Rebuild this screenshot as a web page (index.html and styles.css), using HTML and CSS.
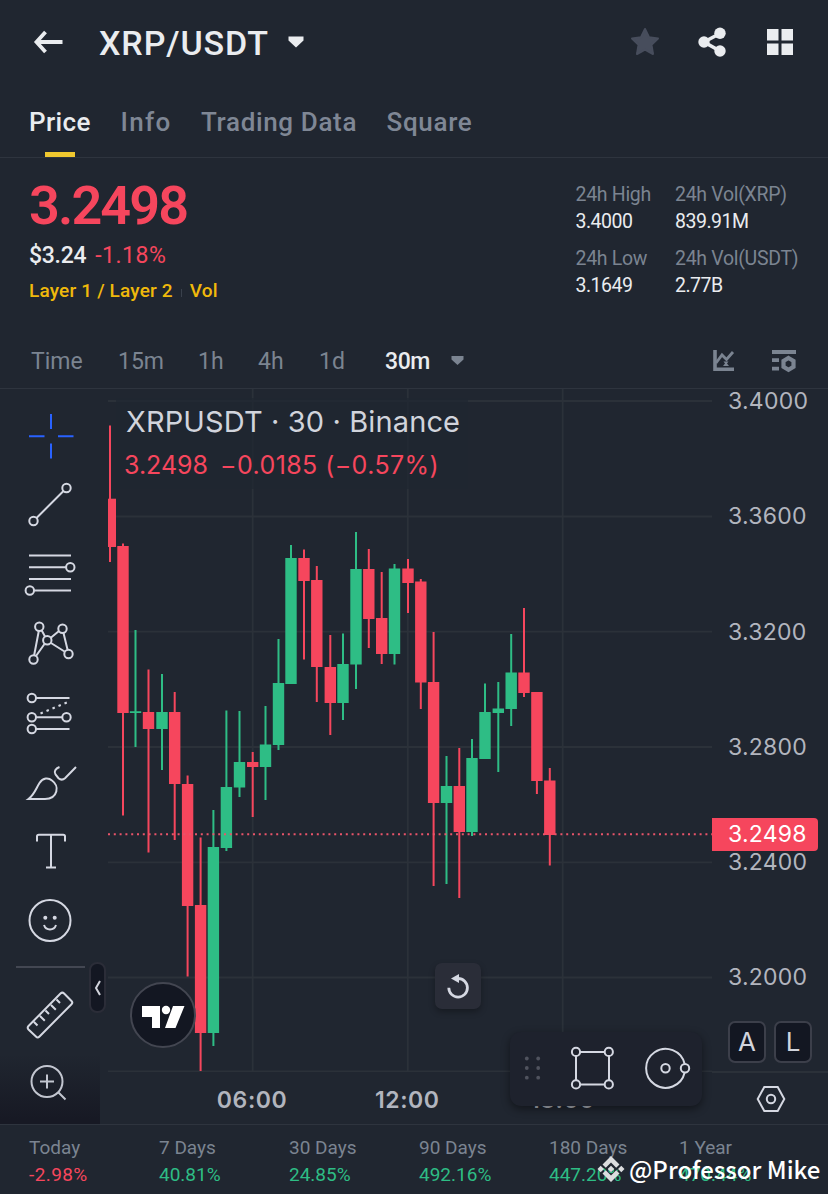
FILE: index.html
```html
<!DOCTYPE html>
<html lang="en">
<head>
  <meta charset="UTF-8" />
  <meta name="viewport" content="width=device-width, initial-scale=1" />
  <title>XRP/USDT</title>
  <link rel="stylesheet" href="styles.css">
</head>
<body>

  <header class="header">
    <svg class="back" width="30" height="24" viewBox="0 0 30 24"><path d="M12.500 2L3.500 12l9 10M3.500 12h26" /></svg>
    <h1 class="pair">XRP/USDT</h1>
    <svg class="caret" width="16" height="12" viewBox="0 0 16 12"><path d="M0.5 0.5h15v4L8 11.5 0.5 4.5z" /></svg>
    <div class="header-icons">
      <svg width="30" height="30" viewBox="0 0 30 30"><path class="star" d="M15 2l4 8.200 9 1.300-6.500 6.300 1.500 9.200-8-4.400-8 4.400 1.500-9.200L2 11.500l9-1.300z" /></svg>
      <svg width="30" height="30" viewBox="0 0 30 30"><path class="share-line" d="M22 6.500L6 15l16 9" /><g class="light"><circle cx="22" cy="6.300" r="5.700" /><circle cx="6" cy="15" r="5.700" /><circle cx="22" cy="24" r="5.700" /></g></svg>
      <svg width="30" height="30" viewBox="0 0 30 30"><path class="light" d="M2 2h11.500v11.500H2zM16.500 2H28v11.500H16.500zM2 16.500h11.500V28H2zM16.500 16.500H28V28H16.500z" /></svg>
    </div>
  </header>

  <nav class="tabs">
    <a class="tab active">Price</a>
    <a class="tab info">Info</a>
    <a class="tab">Trading Data</a>
    <a class="tab">Square</a>
  </nav>

  <section class="summary">
    <div class="quote">
      <div class="last">3.2498</div>
      <div class="fiat"><span>$3.24</span><span class="down">-1.18%</span></div>
      <div class="tags"><span>Layer 1 / Layer 2</span><i></i><span>Vol</span></div>
    </div>
    <dl class="stats">
      <div><dt>24h High</dt><dd>3.4000</dd></div>
      <div><dt>24h Vol(XRP)</dt><dd>839.91M</dd></div>
      <div><dt>24h Low</dt><dd>3.1649</dd></div>
      <div><dt>24h Vol(USDT)</dt><dd>2.77B</dd></div>
    </dl>
  </section>

  <div class="intervals">
    <span class="time">Time</span>
    <span class="m15">15m</span>
    <span class="h1">1h</span>
    <span class="h4">4h</span>
    <span class="d1">1d</span>
    <span class="m30">30m</span>
    <svg class="caret" width="13" height="9" viewBox="0 0 13 9"><path d="M0.500 0h12v3.500l-6 5.500-6-5.500z" /></svg>
    <div class="interval-icons">
      <svg width="22" height="22" viewBox="0 0 22 22"><path d="M2 0v19.200h19" stroke-width="3.600" /><path d="M3 13l6-8 4.500 4.500L20 2" stroke-width="2.800" /><path class="fill" d="M10.500 11.500h5l-1.500 2 2 2.500h-6l2-2.500z" /></svg>
      <svg width="26" height="24" viewBox="0 0 26 24"><path d="M1 3h24M1 11.200h7M1 19.700h7" stroke-width="3.800" /><path d="M17.500 9l5 2.900v6l-5 3-5-3v-6z" stroke-width="4.200" /></svg>
    </div>
  </div>

  <main class="chart">
    <aside class="tools">
      <svg width="100" height="69" viewBox="0 401 100 69"><path class="blue" d="M51 414v15M51 443.500v15M29 436.200h15.500M58 436.200h15.500" /></svg>
      <svg width="100" height="69" viewBox="0 470 100 69"><path d="M36.500 518L63.500 491" /><circle cx="33.500" cy="521" r="4.200" /><circle cx="66.500" cy="488" r="4.200" /></svg>
      <svg width="100" height="69" viewBox="0 539 100 69"><path d="M29 555.500h42M29 567.300h37M29 579h42M34 590.500h37" /><circle cx="70.300" cy="567.300" r="4.200" /><circle cx="29.800" cy="590.500" r="4.200" /></svg>
      <svg width="100" height="69" viewBox="0 608 100 69"><path d="M38.800 631L34.200 655M41.500 630L45 636.500M36 656L44.500 644M50.500 638L59 631M51 643L64.500 651.500M63.500 633L67.500 649.500" /><circle cx="39.300" cy="626.800" r="4.200" /><circle cx="62.500" cy="628.800" r="4.200" /><circle cx="47.300" cy="640.300" r="4.200" /><circle cx="33.500" cy="659.500" r="4.200" /><circle cx="68.500" cy="654" r="4.200" /></svg>
      <svg width="100" height="69" viewBox="0 677 100 69"><path d="M36 698h33.500M36 717.300h26M36 729h33.500" /><path class="dots" d="M40.500 713.500L68 702" /><circle cx="31.800" cy="698" r="4.200" /><circle cx="31.800" cy="717.300" r="4.200" /><circle cx="66.500" cy="717.300" r="4.200" /><circle cx="31.800" cy="729" r="4.200" /></svg>
      <svg width="100" height="69" viewBox="0 746 100 69"><path d="M28.500 799c6-4.500 7.500-10.500 11-16 3.500-5.500 9-5.500 12.500-2.500 3.500 2.500 5.500 7 4.300 11-1.500 5.500-6.300 7.500-11.300 7.500zM59.500 767c-4 1.500-6 4.500-4 7.500l3 3.700c2 1.800 4.500 1.800 6.500 0L76 767" /></svg>
      <svg width="100" height="69" viewBox="0 815 100 69"><path d="M37 841.500v-5q0-1.800 1.800-1.800h24.400q1.800 0 1.800 1.800v5M51 834.700v32.800M46 867.500h10" /></svg>
      <svg width="100" height="69" viewBox="0 884 100 69"><circle cx="50" cy="920.500" r="20.500" /><path d="M44 925c2 6 10 6 12 0" /><circle class="dot" cx="45.300" cy="917.700" r="2" /><circle class="dot" cx="54.700" cy="917.700" r="2" /></svg>
      <hr>
      <svg width="100" height="69" viewBox="0 980 100 69"><path d="M28.500 1026L60.500 993.500q1.800-1.800 3.600 0L71.500 1001q1.600 1.600 0 3.200L39.500 1036.500q-1.800 1.800-3.600 0L28.500 1029.500q-1.600-1.700 0-3.500zM34 1022l3.500 3.500M40 1016l4.800 4.800M45.500 1010.500l3.500 3.500M51 1005l4.800 4.800M56.500 999.500l3.500 3.500" /></svg>
      <svg class="zoom-in" width="100" height="75" viewBox="0 1049 100 75"><circle cx="47" cy="1081.500" r="15.500" /><path d="M58 1092l7.500 7.500M40 1081.500h14M47 1074.500v14" /></svg>
    </aside>

    <div class="plot">
      <svg class="candles" width="612" height="683" viewBox="100 389 612 683">
        <path class="grid" d="M108 401H712M108 516.500H712M108 631.700H712M108 747H712M108 862.300H712M108 977.500H712M252.700 389V1071M407.800 389V1071M562.700 389V1071M108 1071.500H712" />
        <path class="wick up" d="M135.500 630V747M162 674V770M213.400 810V1046M226.400 710.500V851M239.500 711V797M265.500 706V800M278.500 639V750M291 545V683M343 633.500V720M356 532V689M394.500 564V664.500M446.500 756V884M472 739V836M485 683.500V759M498.300 682V772M511.200 634V726" />
        <path class="body up" d="M135.500 711.200V713M162 712V729M213.400 847V1033M226.400 787V848M239.500 762V787.500M265.500 744.500V767M278.500 683V745M291 558V684M343 664V703M356 569V664.500M394.500 568.500V654M446.500 786V803M472 758V832M485 712V759M498.300 708.500V713M511.200 672.500V709" />
        <path class="wick down" d="M110 425.500V562M123 543.500V815.500M148.500 669.500V852.500M174.700 692V840M187.600 775.500V976.500M200.600 837.500V1071M252.700 752V817M304 549.500V659.500M316.800 566V702M330.300 635V735M368.800 549V648M381.700 572V664M408 559V613M420.800 579V709M433.600 632V886M459.300 748V898M524 608V697M536.900 692V794M549.800 768V865.500" />
        <path class="body down" d="M123 546V713M148.500 712V729M174.700 712V784M187.600 784V906M200.600 905V1033M252.700 762V767M304 558V581M316.800 580V667M330.300 667V703M368.800 569V619M381.700 618V654M408 568.500V583M420.800 581.500V682.500M433.600 682V803M459.300 786V832M524 672.500V693M536.900 692V781M549.800 780.500V835" />
        <path class="first" d="M108 498.700h8v48.300h-8z" />
        <path class="last-line" d="M108 834.200H712" />
      </svg>
      <div class="times"><span>06:00</span><span>12:00</span><span>18:00</span></div>
      <div class="legend">
        <div class="legend-title">XRPUSDT · 30 · Binance</div>
        <div class="legend-change"><span>3.2498</span><span class="diff">−0.0185 (−0.57%)</span></div>
      </div>
      <button class="collapse"><svg width="8" height="16" viewBox="0 0 8 16"><path d="M6 1L2 8l4 7" /></svg></button>
      <div class="tv-logo"><svg width="44" height="24" viewBox="0 0 44 24"><path d="M1 1h18v22h-8V12H1zM32 1h11.500L34.500 23H24z" /><circle cx="25" cy="5" r="4.200" /></svg></div>
      <button class="reset"><svg width="24" height="26" viewBox="0 0 24 26"><path class="arc" d="M2.800 14.800a9.300 9.300 0 1 0 9.300-9.300" /><path class="head" d="M5 5.500L13 1v9z" /></svg></button>
      <div class="shapes">
        <svg width="192" height="74" viewBox="510 1032 192 74">
          <g class="grip"><circle cx="526.800" cy="1058.500" r="1.900" /><circle cx="538.200" cy="1058.500" r="1.900" /><circle cx="526.800" cy="1068" r="1.900" /><circle cx="538.200" cy="1068" r="1.900" /><circle cx="526.800" cy="1077.700" r="1.900" /><circle cx="538.200" cy="1077.700" r="1.900" /></g>
          <path d="M580 1051.900h25M580 1084.400h25M576 1056v24.500M609 1056v24.500" />
          <circle cx="576" cy="1051.900" r="4.100" /><circle cx="608.800" cy="1051.900" r="4.100" /><circle cx="576" cy="1084.400" r="4.100" /><circle cx="608.800" cy="1084.400" r="4.100" />
          <path d="M684.600 1063.800a19.500 19.500 0 1 0 0 9" /><circle cx="665.500" cy="1068.200" r="4.200" /><circle cx="685" cy="1068.200" r="4.200" />
        </svg>
      </div>
    </div>

    <div class="scale">
      <div class="ticks">
        <span>3.4000</span><span>3.3600</span><span>3.3200</span><span>3.2800</span><span>3.2400</span><span>3.2000</span>
      </div>
      <div class="price-tag">3.2498</div>
      <div class="modes"><button>A</button><button>L</button></div>
      <div class="settings"><svg width="30" height="28" viewBox="0 0 30 28"><path d="M8.300 2h13.400L28.300 14l-6.600 12H8.300L1.700 14z" /><circle cx="15" cy="14" r="4.200" /></svg></div>
    </div>
  </main>

  <footer class="performance">
    <div><span>Today</span><b class="down">-2.98%</b></div>
    <div><span>7 Days</span><b>40.81%</b></div>
    <div><span>30 Days</span><b>24.85%</b></div>
    <div><span>90 Days</span><b>492.16%</b></div>
    <div><span>180 Days</span><b>447.20%</b></div>
    <div><span>1 Year</span><b>470.44%</b></div>
  </footer>

  <div class="watermark">
    <svg width="28" height="28" viewBox="0 0 28 28"><path d="M5.500 9.500L14 1l8.500 8.500-3.300 3.200L14 7.500l-5.200 5.200zM14 10.700l3.300 3.300-3.300 3.300-3.300-3.300zM.5 14l3.200-3.200L7 14l-3.300 3.200zM27.500 14l-3.200-3.200L21 14l3.300 3.200zM5.500 18.500L14 27l8.500-8.500-3.300-3.200L14 20.500l-5.200-5.200z" /></svg>
    <span>@Professor Mike</span>
  </div>

</body>
</html>
```

FILE: styles.css
```css
* {
  box-sizing: border-box;
}

body {
  position: relative;
  width: 828px;
  height: 1194px;
  margin: 0;
  overflow: hidden;
  background: #202630;
  color: #eaecef;
  font-family: Roboto, "Liberation Sans", sans-serif;
}

svg {
  display: block;
  flex: none;
}

button {
  padding: 0;
  border: 0;
}

.down {
  color: #f6465d;
}

/* Header */
.header {
  display: flex;
  align-items: center;
  height: 84px;
  padding: 0 33px;
}

.back path {
  fill: none;
  stroke: #eaecef;
  stroke-width: 3.8;
}

.pair {
  width: 170px;
  margin: 1px 19px 0 36px;
  font-size: 34px;
  font-weight: 500;
  line-height: 40px;
  letter-spacing: 0.9px;
  white-space: nowrap;
}

.header .caret,
.light {
  fill: #eaecef;
}

.header-icons {
  display: flex;
  gap: 37.5px;
  margin-left: auto;
}

.star {
  fill: #474d5c;
  stroke: #474d5c;
  stroke-width: 2;
  stroke-linejoin: round;
}

.share-line {
  fill: none;
  stroke: #eaecef;
  stroke-width: 3.6;
}

/* Tabs */
.tabs {
  display: flex;
  gap: 29.5px;
  height: 74px;
  padding: 21px 29px 0;
  border-bottom: 1px solid #2e343e;
}

.tab {
  color: #7f8795;
  font-size: 26px;
  font-weight: 500;
  line-height: 34px;
  letter-spacing: 0.65px;
  white-space: nowrap;
}

.tab.info {
  width: 51px;
  letter-spacing: 1.3px;
}

.tab.active {
  width: 62px;
  color: #eaecef;
  letter-spacing: 0.4px;
}

.tab.active::after {
  content: "";
  display: block;
  width: 30px;
  height: 5px;
  margin: 13px auto 0;
  background: #f0c82f;
}

/* Summary */
.summary {
  display: flex;
  justify-content: space-between;
  height: 175px;
  padding: 19px 29px 0;
}

.last {
  color: #f6465d;
  font-size: 54px;
  font-weight: 600;
  line-height: 58px;
  letter-spacing: -1.9px;
}

.fiat {
  display: flex;
  gap: 9px;
  margin-top: 7px;
  font-size: 23px;
  font-weight: 500;
  line-height: 28px;
  letter-spacing: -0.3px;
}

.fiat .down {
  font-weight: 400;
  letter-spacing: 0.5px;
}

.tags {
  display: flex;
  align-items: center;
  margin-top: 9px;
  color: #f0b90b;
  font-size: 19px;
  font-weight: 500;
  line-height: 24px;
  letter-spacing: 0.18px;
}

.tags i {
  width: 1px;
  height: 8px;
  margin: 3px 8px 0;
  background: #3a414c;
}

.stats {
  display: grid;
  grid-template-columns: 99.5px 124px;
  grid-auto-rows: 63.5px;
  margin: 4px 0 0;
  font-size: 19.5px;
  line-height: 27px;
  white-space: nowrap;
}

.stats dt {
  color: #7b8491;
  letter-spacing: -0.3px;
}

.stats dd {
  margin: 0;
  letter-spacing: -0.5px;
}

/* Intervals */
.intervals {
  display: flex;
  align-items: center;
  height: 56px;
  padding: 0 31px;
  border-bottom: 1px solid #2e343e;
  color: #7b8491;
  font-size: 23px;
}

.intervals span {
  padding-top: 2px;
}

.intervals .time { width: 87px; }
.intervals .m15 { width: 80px; }
.intervals .h1 { width: 60px; }
.intervals .h4 { width: 61px; }
.intervals .d1 { width: 66px; }

.intervals .m30 {
  width: 66px;
  color: #eaecef;
  font-weight: 500;
  letter-spacing: -0.4px;
}

.intervals .caret {
  fill: #7b8491;
}

.interval-icons {
  display: flex;
  align-items: center;
  gap: 36px;
  margin-left: auto;
}

.interval-icons path {
  fill: none;
  stroke: #7b8491;
}

.interval-icons .fill {
  fill: #7b8491;
  stroke: none;
}

/* Chart */
.chart {
  display: grid;
  grid-template-columns: 100px 612px 116px;
  height: 735px;
  font-family: Inter, "Liberation Sans", sans-serif;
}

.tools {
  height: 735px;
  padding-top: 12px;
  background: linear-gradient(transparent 665px, #171924 730px);
}

.tools path,
.tools circle {
  fill: none;
  stroke: #d5d8e2;
  stroke-width: 2;
}

.tools .blue {
  stroke: #2962ff;
}

.tools .dots {
  stroke-dasharray: 2.5 4;
}

.tools .dot {
  fill: #d5d8e2;
  stroke: none;
}

.tools hr {
  width: 69px;
  height: 2px;
  margin: 13px 0 12px 16px;
  border: 0;
  background: #434752;
}

.zoom-in {
  opacity: 0.9;
}

.plot {
  position: relative;
}

.candles path {
  fill: none;
}

.candles .grid {
  stroke: #2b3139;
  stroke-width: 1.8;
}

.candles .up { stroke: #2ebd85; }
.candles .down { stroke: #f6465d; }
.candles .wick { stroke-width: 2; }
.candles .body { stroke-width: 11.4; }
.candles .first { fill: #f6465d; }

.candles .last-line {
  stroke: #e9546a;
  stroke-width: 2;
  stroke-dasharray: 2 3.8;
}

.times {
  display: flex;
  padding-left: 74.5px;
  color: #b2b5be;
  font-size: 23px;
  font-weight: 600;
  line-height: 30px;
  letter-spacing: 0.6px;
}

.times span {
  width: 155.2px;
  margin-top: 13px;
  text-align: center;
}

.legend {
  position: absolute;
  top: 9px;
  left: 16px;
  padding: 6px 8px 6px 10px;
  background: rgba(32, 38, 48, 0.7);
  white-space: nowrap;
}

.legend-title {
  color: #d1d4dc;
  font-size: 29px;
  line-height: 36px;
  letter-spacing: 0.12px;
}

.legend-change {
  display: flex;
  gap: 12px;
  margin: 7px 0 0 -2px;
  color: #f6465d;
  font-size: 25px;
  line-height: 36px;
}

.legend-change .diff {
  letter-spacing: 0.4px;
}

.collapse {
  position: absolute;
  top: 573px;
  left: -11px;
  display: flex;
  align-items: center;
  justify-content: center;
  width: 17px;
  height: 51px;
  border: 2px solid #2b2d38;
  border-radius: 8px;
  background: #131722;
}

.collapse path {
  fill: none;
  stroke: #d1d4dc;
  stroke-width: 2;
}

.tv-logo {
  position: absolute;
  top: 593px;
  left: 30px;
  display: flex;
  align-items: center;
  justify-content: center;
  width: 66px;
  height: 66px;
  border: 2px solid #434651;
  border-radius: 50%;
  background: #131722;
}

.tv-logo svg {
  margin-top: 3px;
  fill: #fff;
}

.reset {
  position: absolute;
  top: 574px;
  left: 335px;
  display: flex;
  align-items: center;
  justify-content: center;
  width: 46px;
  height: 46px;
  border-radius: 7px;
  background: #2a2d38;
  box-shadow: 0 3px 6px rgba(0, 0, 0, 0.3);
}

.reset .arc {
  fill: none;
  stroke: #d5d8e2;
  stroke-width: 2.8;
}

.reset .head {
  fill: #d5d8e2;
}

.shapes {
  position: absolute;
  top: 643px;
  left: 410px;
  border-radius: 11px;
  background: #1e222d;
  box-shadow: 0 3px 9px rgba(0, 0, 0, 0.45);
}

.shapes path,
.shapes circle {
  fill: none;
  stroke: #d5d8e2;
  stroke-width: 2;
}

.shapes .grip circle {
  fill: #50535e;
  stroke: none;
}

.scale {
  position: relative;
  color: #b2b5be;
  font-size: 23px;
  letter-spacing: 0.25px;
}

.ticks {
  display: flex;
  flex-direction: column;
  gap: 91.3px;
  height: 632px;
  padding-left: 16px;
  line-height: 24px;
}

.price-tag {
  position: absolute;
  top: 429px;
  left: 0;
  width: 106px;
  height: 33px;
  padding-left: 16px;
  border-radius: 0 4px 4px 0;
  background: #f6465d;
  color: #fff;
  line-height: 33px;
}

.modes {
  display: flex;
  gap: 8px;
  padding-left: 16px;
}

.modes button {
  width: 38px;
  height: 42px;
  border: 2px solid #3c3f4a;
  border-radius: 7px;
  background: #131722;
  color: #d1d4dc;
  font: 26px/38px Inter, sans-serif;
}

.settings {
  margin-top: 8px;
  padding: 12px 0 0 44px;
  border-top: 2px solid #2b3139;
}

.settings path,
.settings circle {
  fill: none;
  stroke: #d5d8e2;
  stroke-width: 2;
}

/* Performance */
.performance {
  display: grid;
  grid-template-columns: repeat(6, 130px);
  height: 70px;
  padding: 9px 0 0 29px;
  border-top: 1px solid #2e343e;
  font-size: 19px;
  line-height: 27px;
}

.performance span {
  display: block;
  color: #7b8491;
}

.performance b {
  color: #2ebd85;
  font-weight: 400;
}

.performance .down {
  color: #f6465d;
  letter-spacing: 0.4px;
}

.watermark {
  position: absolute;
  top: 1152px;
  left: 597px;
  display: flex;
  align-items: center;
  gap: 4px;
  color: #fff;
  font: 500 24px/34px "Noto Sans CJK SC", sans-serif;
  white-space: nowrap;
}

.watermark svg {
  fill: #dcdddf;
}
```
